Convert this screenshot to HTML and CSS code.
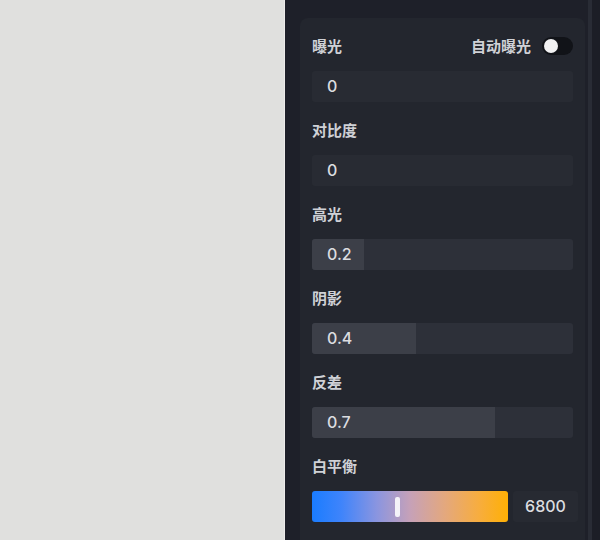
FILE: index.html
```html
<!DOCTYPE html>
<html lang="zh-CN">
<head>
<meta charset="utf-8">
<title>调整</title>
<link rel="stylesheet" href="styles.css">
</head>
<body>
<div class="canvas"></div>
<div class="panel">
  <div class="card">
    <div class="field">
      <div class="label-row">
        <span class="label">曝光</span>
        <span class="auto">
          <span class="auto-text">自动曝光</span>
          <span class="toggle"><span class="knob"></span></span>
        </span>
      </div>
      <div class="input"><span class="value">0</span></div>
    </div>
    <div class="field">
      <div class="label-row"><span class="label">对比度</span></div>
      <div class="input"><span class="value">0</span></div>
    </div>
    <div class="field">
      <div class="label-row"><span class="label">高光</span></div>
      <div class="input slider"><div class="fill" style="width:20%"><span class="value">0.2</span></div></div>
    </div>
    <div class="field">
      <div class="label-row"><span class="label">阴影</span></div>
      <div class="input slider"><div class="fill" style="width:40%"><span class="value">0.4</span></div></div>
    </div>
    <div class="field">
      <div class="label-row"><span class="label">反差</span></div>
      <div class="input slider"><div class="fill" style="width:70%"><span class="value">0.7</span></div></div>
    </div>
    <div class="field">
      <div class="label-row"><span class="label">白平衡</span></div>
      <div class="wb-row">
        <div class="wb-bar"><span class="wb-thumb" style="left:42.5%"></span></div>
        <div class="wb-value">6800</div>
      </div>
    </div>
  </div>
  <div class="gutter"></div>
  <div class="track"></div>
  <div class="edge"></div>
</div>
</body>
</html>
```

FILE: styles.css
```css
html, body {
  margin: 0;
  padding: 0;
  height: 540px;
  overflow: hidden;
}
body {
  display: flex;
  background: #e0e0de;
  font-family: "Liberation Sans", "Noto Sans CJK SC", sans-serif;
}
.canvas {
  width: 284px;
  flex: none;
  border-right: 1px solid #ecebea;
}
.panel {
  flex: 1;
  display: flex;
  align-items: flex-start;
  background: #1e2029;
  padding: 18px 0 0 15px;
  height: 540px;
  box-sizing: border-box;
}
.card {
  width: 285px;
  flex: none;
  box-sizing: border-box;
  background: #23262e;
  border-radius: 8px 8px 0 0;
  padding: 18px 12px 0 12px;
  height: 540px;
  display: flex;
  flex-direction: column;
  gap: 18px;
}
.gutter {
  width: 3px;
  flex: none;
}
.track {
  width: 4px;
  flex: none;
  align-self: stretch;
  margin-top: -18px;
  background: #292c35;
}
.edge {
  flex: 1;
  align-self: stretch;
  margin-top: -18px;
  background: #1c1e26;
}
.field {
  display: flex;
  flex-direction: column;
  gap: 15px;
}
.label-row {
  height: 20px;
  display: flex;
  align-items: center;
  justify-content: space-between;
}
.label,
.auto-text {
  font-family: "Noto Sans CJK SC", sans-serif;
  font-size: 15px;
  font-weight: 700;
  color: #cfd1d6;
  line-height: 20px;
  margin-top: -1px;
}
.auto {
  display: flex;
  align-items: center;
  gap: 11px;
}
.toggle {
  width: 31px;
  height: 18px;
  border-radius: 9px;
  background: #111318;
  display: flex;
  align-items: center;
  padding-left: 2px;
  box-sizing: border-box;
}
.knob {
  width: 14px;
  height: 14px;
  border-radius: 50%;
  background: #f2f2f3;
}
.input {
  height: 31px;
  border-radius: 3px;
  background: #282b33;
  display: flex;
  align-items: center;
  overflow: hidden;
}
.input > .value {
  padding-left: 15px;
}
.value,
.wb-value {
  font-family: Inter, "Liberation Sans", sans-serif;
  font-size: 16px;
  font-weight: 500;
  color: #dcdde0;
  line-height: 31px;
}
.slider {
  background: #2d3039;
}
.fill {
  height: 100%;
  background: #3c3f48;
  display: flex;
  align-items: center;
  padding-left: 15px;
  box-sizing: border-box;
  white-space: nowrap;
}
.wb-row {
  display: flex;
  gap: 5px;
  width: 266px;
}
.wb-bar {
  position: relative;
  width: 196px;
  height: 31px;
  border-radius: 3px;
  background: linear-gradient(90deg, #1a7cff 0%, #3f84fb 15%, #8a95e0 33%, #c6a1b8 50%, #e4a87d 68%, #f7ad3f 85%, #ffb005 100%);
}
.wb-thumb {
  position: absolute;
  top: 6px;
  width: 5px;
  height: 20px;
  border-radius: 2px;
  background: #f4f2f8;
}
.wb-value {
  width: 65px;
  height: 31px;
  border-radius: 3px;
  background: #272a32;
  display: flex;
  align-items: center;
  justify-content: center;
}
```
